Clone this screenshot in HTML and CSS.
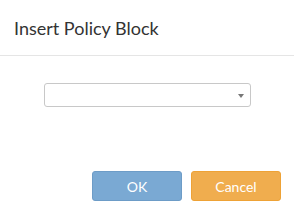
FILE: index.html
```html
<!DOCTYPE html>
<html lang="en">
  <head>
    <meta charset="utf-8">
    <title>Insert Policy Block</title>
    <link rel="stylesheet" href="styles.css">
  </head>
  <body>
    <div class="modal">
      <div class="modalHeader">
        <h4 class="modalTitle">Insert Policy Block</h4>
      </div>
      <div class="modalBody">
        <div class="selectBox">
          <span class="selectArrow"></span>
        </div>
      </div>
      <div class="modalFooter">
        <button class="btn btnOk">OK</button>
        <button class="btn btnCancel">Cancel</button>
      </div>
    </div>
  </body>
</html>
```

FILE: styles.css
```css
html, body {
  margin: 0;
  padding: 0;
  background: #fff;
}

body {
  font-family: 'Lato', 'Liberation Sans', sans-serif;
  color: #333;
}

.modal {
  width: 294px;
  height: 215px;
  display: flex;
  flex-direction: column;
}

.modalHeader {
  padding: 15px 14px 14px;
  border-bottom: 1px solid #e5e5e5;
}

.modalTitle {
  margin: 0;
  font-size: 18px;
  font-weight: normal;
  line-height: 26px;
}

.modalBody {
  padding: 27px 0 0;
  display: flex;
  justify-content: center;
}

.selectBox {
  position: relative;
  width: 205px;
  height: 22px;
  border: 1px solid #c8c8c8;
  border-radius: 3px;
  background: #fff;
}

.selectArrow {
  position: absolute;
  right: 6px;
  top: 10px;
  width: 0;
  height: 0;
  border-left: 3px solid transparent;
  border-right: 3px solid transparent;
  border-top: 4px solid #777;
}

.modalFooter {
  margin-top: auto;
  padding: 0 13px 14px 0;
  display: flex;
  justify-content: flex-end;
  gap: 9px;
}

.btn {
  width: 90px;
  height: 30px;
  font-family: inherit;
  font-size: 14px;
  color: #fff;
  border-radius: 3px;
  border: 1px solid;
  padding: 0;
}

.btnOk {
  background: #7aa9d3;
  border-color: #6d9cc7;
}

.btnCancel {
  background: #f0ad4e;
  border-color: #eea236;
}
```
